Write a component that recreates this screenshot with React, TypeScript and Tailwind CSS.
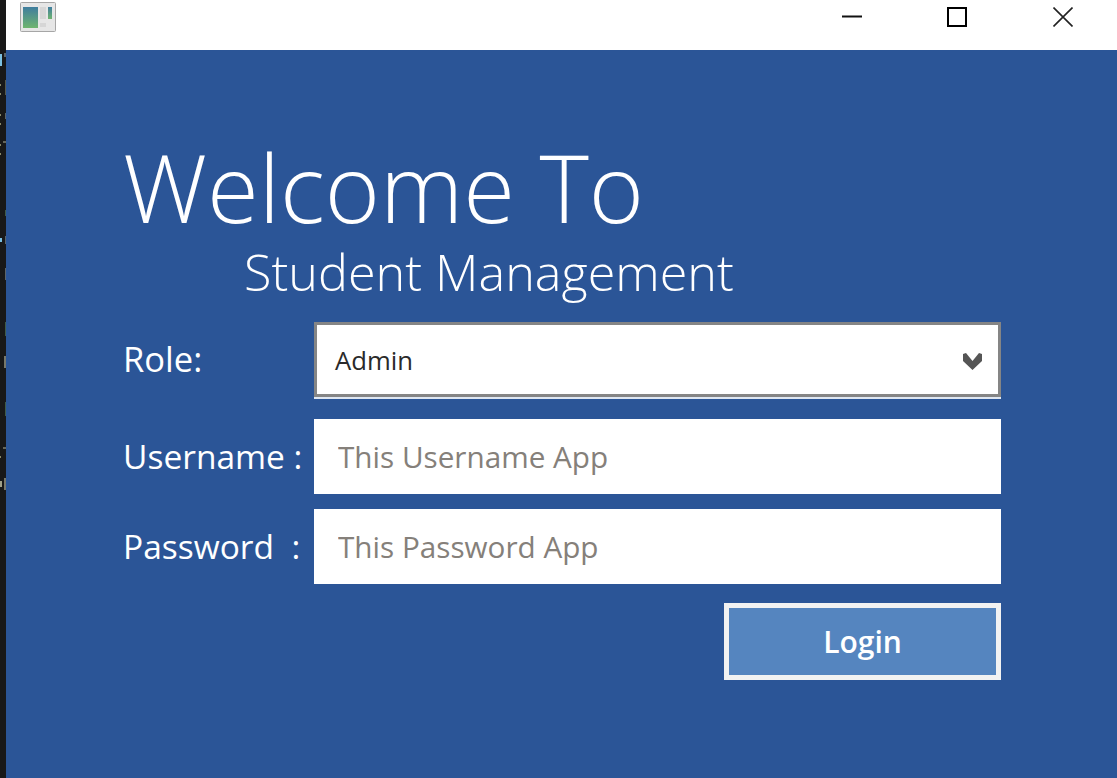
const font = "font-['Open_Sans',sans-serif]";

function AppIcon() {
  return (
    <svg width="36" height="30" viewBox="0 0 36 30">
      <defs>
        <linearGradient id="pic" x1="0" y1="0" x2="0" y2="1">
          <stop offset="0" stopColor="#3f7d9e" />
          <stop offset="1" stopColor="#6fb56f" />
        </linearGradient>
      </defs>
      <rect x="0.5" y="0.5" width="35" height="29" rx="1" fill="#e6e6e6" stroke="#a6a6a6" />
      <rect x="3" y="5" width="15" height="21" fill="url(#pic)" />
      <rect x="28" y="5" width="4" height="12" fill="url(#pic)" />
      <path d="M20 6h6M20 8h6M20 10h6M20 12h6M20 14h6M20 16h6M20 22h6M20 24h6" stroke="#c6c6c6" strokeWidth="1" />
    </svg>
  );
}

// bits of the window behind, showing along the left edge
function BehindStrip() {
  return (
    <svg width="6" height="778" viewBox="0 0 6 778" className="shrink-0">
      <rect width="6" height="778" fill="#181818" />
      <rect x="0" y="54" width="2" height="12" fill="#7cc0e0" />
      <rect x="4" y="53" width="2" height="4" fill="#5c6468" />
      <rect x="5" y="80" width="1" height="15" fill="#55584c" />
      <rect x="0" y="84" width="1" height="2" fill="#8a8a6a" />
      <rect x="0" y="93" width="1" height="2" fill="#8a8a6a" />
      <rect x="5" y="113" width="1" height="6" fill="#5c6468" />
      <rect x="0" y="114" width="1" height="2" fill="#8a8a6a" />
      <rect x="0" y="123" width="1" height="2" fill="#8a8a6a" />
      <rect x="3" y="141" width="3" height="2" fill="#66665a" />
      <rect x="0" y="144" width="1" height="2" fill="#8a8a6a" />
      <rect x="0" y="153" width="1" height="2" fill="#8a8a6a" />
      <rect x="5" y="210" width="1" height="6" fill="#3f5a48" />
      <rect x="0" y="238" width="2" height="4" fill="#7cc0e0" />
      <rect x="5" y="236" width="1" height="8" fill="#5c6468" />
      <rect x="5" y="268" width="1" height="12" fill="#5c6468" />
      <rect x="5" y="322" width="1" height="14" fill="#3f5a48" />
      <rect x="4" y="356" width="2" height="12" fill="#77776a" />
      <rect x="5" y="402" width="1" height="14" fill="#3f5a48" />
      <rect x="3" y="447" width="3" height="2" fill="#66665a" />
      <rect x="0" y="456" width="1" height="2" fill="#8a8a6a" />
      <rect x="4" y="478" width="2" height="12" fill="#77776a" />
      <rect x="0" y="481" width="2" height="6" fill="#a0a088" />
    </svg>
  );
}

function Field({ label, placeholder }: { label: string; placeholder: string }) {
  return (
    <div className="flex items-center">
      <label className="w-[191px] whitespace-pre text-[33.5px] leading-none text-white">{label}</label>
      <input
        className="h-[75px] w-[687px] bg-white pl-6 text-[29.7px] text-[#3c3c3c] outline-none placeholder:text-[#85807a]"
        placeholder={placeholder}
      />
    </div>
  );
}

export default function App() {
  return (
    <div className={`flex h-[778px] w-[1117px] overflow-hidden bg-white ${font}`}>
      <BehindStrip />
      <div className="flex flex-1 flex-col">
        {/* Title bar */}
        <div className="flex h-[50px] items-start justify-between bg-white">
          <div className="pl-[14px] pt-[2px]">
            <AppIcon />
          </div>
          <div className="flex items-center gap-[85px] pr-[44px] pt-[7px]">
            <svg width="20" height="20" viewBox="0 0 20 20">
              <path d="M0 9.5H20" stroke="#111" strokeWidth="2" />
            </svg>
            <div className="h-[20px] w-[20px] border-2 border-black" />
            <svg width="20" height="20" viewBox="0 0 20 20" className="ml-px">
              <path d="M0.5 0.5L19.5 19.5M19.5 0.5L0.5 19.5" stroke="#222" strokeWidth="1.6" />
            </svg>
          </div>
        </div>

        {/* Login form */}
        <div className="flex-1 bg-[#2b5597] pl-[117px]">
          <h1 className="pt-[82px] text-[94.2px] font-light leading-[110px] text-white">Welcome To</h1>
          <h2 className="pl-[121px] text-[50.3px] font-light leading-[60px] text-white">Student Management</h2>
          <div className="mt-[20px] flex items-center">
            <label className="w-[191px] text-[34.5px] leading-none text-white">Role:</label>
            <div className="flex h-[75px] w-[687px] items-center justify-between border-[3px] border-[#858585] bg-white pl-[18px] pr-[16px] pt-[3px] shadow-[0_2px_0_#dfe7f2]">
              <span className="text-[25.7px] text-[#2a2a2a]">Admin</span>
              <svg width="19" height="17" viewBox="0 0 19 17">
                <path d="M0 1L3 0L9.5 8L16 0L19 1V8L9.5 17L0 8Z" fill="#555555" />
              </svg>
            </div>
          </div>
          <div className="mt-[22px] flex flex-col gap-[15px]">
            <Field label="Username :" placeholder="This Username App" />
            <Field label="Password  :" placeholder="This Password App" />
          </div>
          <div className="mt-[19px] flex w-[878px] justify-end">
            <button className="h-[77px] w-[277px] border-[5px] border-[#f2f2f2] bg-[#5585bf] text-[30px] font-semibold text-white">
              Login
            </button>
          </div>
        </div>
      </div>
    </div>
  );
}
